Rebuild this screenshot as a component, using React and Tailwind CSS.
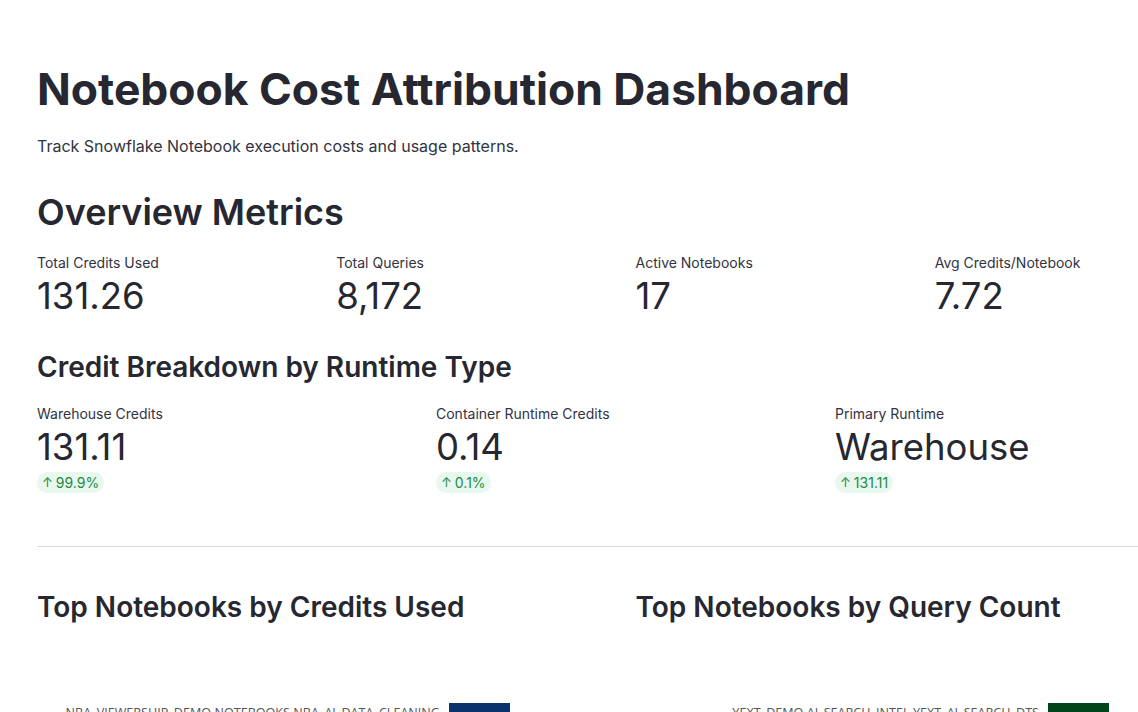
import React from "react";

const overview = [
    { label: "Total Credits Used", value: "131.26" },
    { label: "Total Queries", value: "8,172" },
    { label: "Active Notebooks", value: "17" },
    { label: "Avg Credits/Notebook", value: "7.72" },
];

const breakdown = [
    { label: "Warehouse Credits", value: "131.11", delta: "99.9%" },
    { label: "Container Runtime Credits", value: "0.14", delta: "0.1%" },
    { label: "Primary Runtime", value: "Warehouse", delta: "131.11" },
];

const Metric = ({ label, value, delta }) => (
    <div className="flex flex-col">
        <div className="text-[14px] leading-[20px]">{label}</div>
        <div className="text-[36.5px] leading-[43px] mt-[2px] text-[#262730]">{value}</div>
        {delta && (
            <div>
                <span className="inline-flex items-center h-[21px] px-[5px] rounded-full bg-[#e8f8ee] text-[#1f8a3f] text-[14px] leading-[21px]">
                    <span className="mr-[3px] text-[13px]">↑</span>
                    {delta}
                </span>
            </div>
        )}
    </div>
);

const BarChart = ({ title, label, color }) => (
    <div className="flex flex-col">
        <h3 className="text-[28px] leading-[34px] font-semibold text-[#262730]">{title}</h3>
        <svg width="582" height="80" className="mt-[29px] block">
            <text
                x="403"
                y="64"
                textAnchor="end"
                fontSize="12.6"
                fill="#555"
                fontFamily="'Open Sans', sans-serif"
            >
                {label}
            </text>
            <rect x="412" y="50" width="61" height="30" fill={color} />
        </svg>
    </div>
);

const App = () => {
    return (
        <div className="w-[1138px] h-[712px] overflow-hidden bg-white text-[#31333f] font-['Inter',sans-serif]">
            <div className="w-[1181px] ml-[37px] pt-[63px]">
                <h1 className="text-[44.4px] leading-[53px] font-bold text-[#262730]">
                    Notebook Cost Attribution Dashboard
                </h1>
                <p className="text-[16px] leading-[26px] mt-[17px]">
                    Track Snowflake Notebook execution costs and usage patterns.
                </p>

                <h2 className="text-[36px] leading-[43px] font-semibold mt-[32px] text-[#262730]">Overview Metrics</h2>
                <div className="grid grid-cols-4 gap-4 mt-[19px]">
                    {overview.map((m) => (
                        <Metric key={m.label} {...m} />
                    ))}
                </div>

                <h3 className="text-[28px] leading-[34px] font-semibold mt-[32px] text-[#262730]">
                    Credit Breakdown by Runtime Type
                </h3>
                <div className="grid grid-cols-3 gap-4 mt-[20px]">
                    {breakdown.map((m) => (
                        <Metric key={m.label} {...m} />
                    ))}
                </div>

                <div className="border-t border-[#dcdcde] mt-[53px]" />

                <div className="grid grid-cols-2 gap-4 mt-[43px]">
                    <BarChart
                        title="Top Notebooks by Credits Used"
                        label="NBA_VIEWERSHIP_DEMO.NOTEBOOKS.NBA_AI_DATA_CLEANING"
                        color="#0a336e"
                    />
                    <BarChart
                        title="Top Notebooks by Query Count"
                        label="YEXT_DEMO.AI_SEARCH_INTEL.YEXT_AI_SEARCH_DTS"
                        color="#00441b"
                    />
                </div>
            </div>
        </div>
    );
};

export default App;
